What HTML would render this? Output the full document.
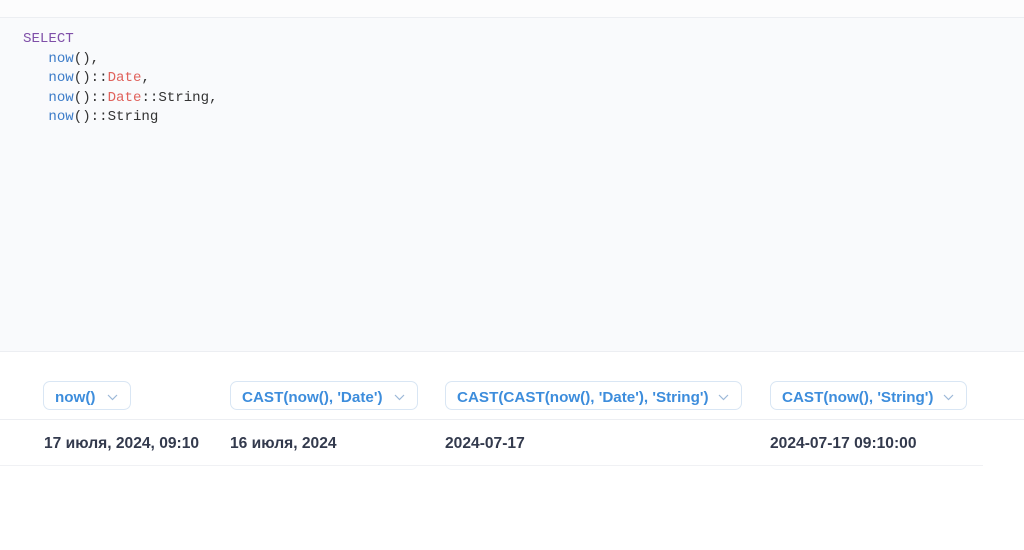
<!DOCTYPE html>
<html><head><style>
body{margin:0;width:1024px;height:550px;background:#fff;position:relative;overflow:hidden;font-family:"Liberation Sans",sans-serif}
.top{position:absolute;left:0;top:0;width:1024px;height:17px;background:#fcfcfd;border-bottom:1px solid #eceef2}
.ed{position:absolute;left:0;top:18px;width:1024px;height:333px;background:#f9fafc;border-bottom:1px solid #eceef2}
pre{position:absolute;left:23px;top:12px;margin:0;font-family:"Liberation Mono",monospace;font-size:14.1px;line-height:19.6px;color:#333}
.k{color:#7f4fa8}.f{color:#3c7cc8}.t{color:#e0625c}
.pill{position:absolute;top:381px;height:29px;border:1px solid #d9e6f4;border-radius:7px;box-sizing:border-box;color:#3d8ddc;font-weight:bold;font-size:15.2px;line-height:31px;padding-left:11px;white-space:nowrap}
.pill svg{position:absolute;right:12px;top:12px}
.line{position:absolute;left:0;top:419px;width:1024px;height:1px;background:#eceef2}
.line2{position:absolute;left:0;top:465px;width:983px;height:1px;background:#f0f1f4}
.c{position:absolute;top:435px;font-weight:bold;font-size:15.6px;color:#333a4d;white-space:nowrap}
</style></head><body>
<div class="top"></div>
<div class="ed"><pre><span class="k">SELECT</span>
   <span class="f">now</span>(),
   <span class="f">now</span>()::<span class="t">Date</span>,
   <span class="f">now</span>()::<span class="t">Date</span>::String,
   <span class="f">now</span>()::String</pre></div>
<div class="pill" style="left:43px;width:88px">now()<svg width="11" height="7"><path d="M1 1l4.5 4.5L10 1" fill="none" stroke="#9cb8d8" stroke-width="1.2"/></svg></div>
<div class="pill" style="left:230px;width:188px">CAST(now(), 'Date')<svg width="11" height="7"><path d="M1 1l4.5 4.5L10 1" fill="none" stroke="#9cb8d8" stroke-width="1.2"/></svg></div>
<div class="pill" style="left:445px;width:297px">CAST(CAST(now(), 'Date'), 'String')<svg width="11" height="7"><path d="M1 1l4.5 4.5L10 1" fill="none" stroke="#9cb8d8" stroke-width="1.2"/></svg></div>
<div class="pill" style="left:770px;width:197px">CAST(now(), 'String')<svg width="11" height="7"><path d="M1 1l4.5 4.5L10 1" fill="none" stroke="#9cb8d8" stroke-width="1.2"/></svg></div>
<div class="line"></div>
<div class="c" style="left:44px">17 июля, 2024, 09:10</div>
<div class="c" style="left:230px">16 июля, 2024</div>
<div class="c" style="left:445px">2024-07-17</div>
<div class="c" style="left:770px">2024-07-17 09:10:00</div>
<div class="line2"></div>
</body></html>
